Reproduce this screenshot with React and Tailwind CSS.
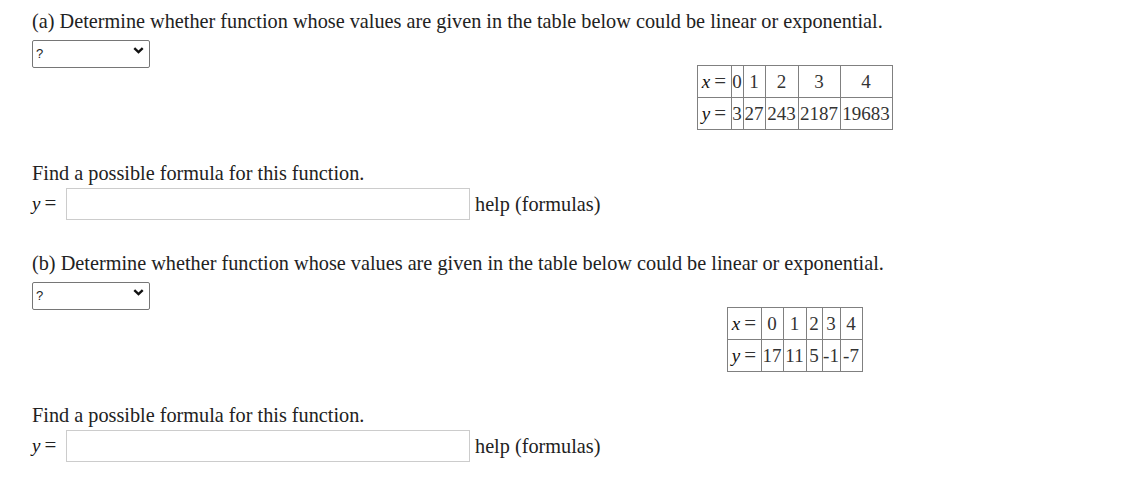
import React from 'react';

const parts = [
  {
    label: '(a)',
    xs: ['0', '1', '2', '3', '4'],
    ys: ['3', '27', '243', '2187', '19683'],
    widths: [12, 22, 33, 42, 52],
  },
  {
    label: '(b)',
    xs: ['0', '1', '2', '3', '4'],
    ys: ['17', '11', '5', '-1', '-7'],
    widths: [22, 23, 16, 18, 22],
  },
];

function Chooser() {
  return (
    <div className="relative h-[28px] w-[118px]">
      <select className="h-full w-full appearance-none rounded-[2px] border border-[#767676] bg-white pl-[3px] font-['Liberation_Sans',sans-serif] text-[13px] text-[#222]">
        <option>?</option>
        <option>linear</option>
        <option>exponential</option>
      </select>
      <svg
        className="pointer-events-none absolute right-[6px] top-[11px]"
        width="11"
        height="7"
        viewBox="0 0 11 7"
      >
        <path d="M1.3 1.2 L5.5 5.2 L9.7 1.2" fill="none" stroke="#111" strokeWidth="2.4" />
      </svg>
    </div>
  );
}

function Eq({ v }) {
  return (
    <span className="whitespace-nowrap">
      <i className="text-[#111]">{v}</i>
      <span className="ml-[4px] text-[21px]">=</span>
    </span>
  );
}

function ValueTable({ xs, ys, widths }) {
  const cell = 'h-[32px] border border-[#808080] p-0 text-center align-middle';
  return (
    <div className="ml-[421px] flex w-[683px] justify-center">
      <table className="border-collapse font-['Liberation_Serif',serif] text-[19px] leading-none text-[#333]">
        <tbody>
          <tr>
            <td className={`${cell} w-[34px]`}>
              <Eq v="x" />
            </td>
            {xs.map((v, i) => (
              <td key={i} className={cell} style={{ width: widths[i] }}>
                {v}
              </td>
            ))}
          </tr>
          <tr>
            <td className={`${cell} w-[34px]`}>
              <Eq v="y" />
            </td>
            {ys.map((v, i) => (
              <td key={i} className={cell} style={{ width: widths[i] }}>
                {v}
              </td>
            ))}
          </tr>
        </tbody>
      </table>
    </div>
  );
}

function Part({ part }) {
  return (
    <div>
      <p className="h-[29px] leading-[28px]">
        {part.label} Determine whether function whose values are given in the table below could be linear or exponential.
      </p>
      <Chooser />
      <div className="mt-[1px]">
        <ValueTable xs={part.xs} ys={part.ys} widths={part.widths} />
      </div>
      <p className="mt-[29px] h-[29px] leading-[28px]">Find a possible formula for this function.</p>
      <div className="flex h-[32px] items-center">
        <span className="w-[34px] font-['Liberation_Serif',serif] text-[19px]">
          <Eq v="y" />
        </span>
        <input
          type="text"
          className="h-[32px] w-[404px] border border-[#cccccc] bg-white px-1 outline-none"
        />
        <span className="ml-[5px]">help (formulas)</span>
      </div>
    </div>
  );
}

export default function App() {
  return (
    <div className="min-h-[489px] bg-white pl-8 pt-[7px] font-['Liberation_Serif',serif] text-[20.25px] text-[#222]">
      <Part part={parts[0]} />
      <div className="mt-[29px]">
        <Part part={parts[1]} />
      </div>
    </div>
  );
}
